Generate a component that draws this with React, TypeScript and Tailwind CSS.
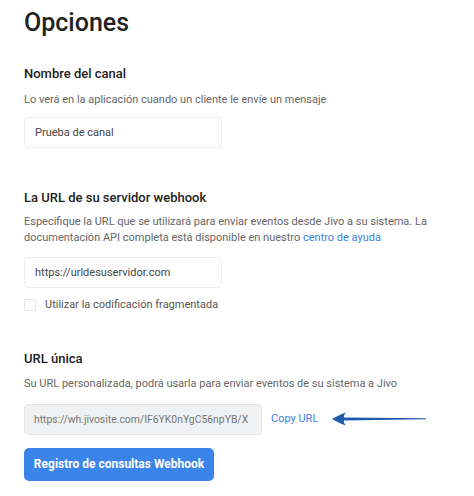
import { useState } from "react";

function Section({ title, children }: { title: string; children: React.ReactNode }) {
  return (
    <div className="flex flex-col">
      <h3 className="text-[13px] font-medium leading-[20px] text-[#222]">{title}</h3>
      {children}
    </div>
  );
}

export default function App() {
  const [chunked, setChunked] = useState(false);

  return (
    <div
      className="min-h-[496px] w-[474px] bg-white px-6 pt-[3px] text-[#333]"
      style={{ fontFamily: 'Roboto, "Noto Sans", sans-serif' }}
    >
      <h1 className="text-[25px] font-medium leading-[40px] text-[#222]">Opciones</h1>

      <div className="mt-[21px]">
        <Section title="Nombre del canal">
          <p className="mt-[7px] text-[11px] leading-[17px] text-[#666]">
            Lo verá en la aplicación cuando un cliente le envíe un mensaje
          </p>
          <input
            defaultValue="Prueba de canal"
            className="mt-[9px] h-[31px] w-[198px] rounded-[4px] border border-[#eceef0] px-[10px] text-[11px] text-[#444] outline-none"
          />
        </Section>
      </div>

      <div className="mt-[40px]">
        <Section title="La URL de su servidor webhook">
          <p className="mt-[6px] text-[11px] leading-[16px] text-[#666]">
            Especifique la URL que se utilizará para enviar eventos desde Jivo a su sistema. La
            documentación API completa está disponible en nuestro{" "}
            <a className="text-[#3d7fe0]">centro de ayuda</a>
          </p>
          <input
            defaultValue="https://urldesuservidor.com"
            className="mt-[11px] h-[31px] w-[198px] rounded-[4px] border border-[#eceef0] px-[10px] text-[11px] text-[#444] outline-none"
          />
          <label className="mt-[9px] flex items-center gap-[9px] text-[11px] text-[#555]">
            <input
              type="checkbox"
              checked={chunked}
              onChange={(e) => setChunked(e.target.checked)}
              className="h-[12px] w-[12px] appearance-none rounded-[2px] border border-[#e3e5e8]"
            />
            Utilizar la codificación fragmentada
          </label>
        </Section>
      </div>

      <div className="mt-[35px]">
        <Section title="URL única">
          <p className="mt-[6px] text-[11px] leading-[17px] text-[#666]">
            Su URL personalizada, podrá usarla para enviar eventos de su sistema a Jivo
          </p>
          <div className="mt-[12px] flex items-center">
            <input
              readOnly
              value="https://wh.jivosite.com/IF6YK0nYgC56npYB/X"
              className="h-[31px] w-[238px] rounded-[4px] border border-[#e2e4e6] bg-[#eff1f2] px-[9px] text-[10.4px] text-[#777] outline-none"
            />
            <a className="ml-[9px] text-[11px] text-[#3d7fe0]">Copy URL</a>
            <svg width="96" height="14" viewBox="0 0 96 14" className="ml-[13px]">
              <path d="M1 7 C5 5 10 2 15 0.5 C13 3 12.5 4.5 13 5.6 L95 6.2 L95 7.2 L13 8.4 C12.5 9.5 13 11 15 13.5 C10 12 5 9 1 7 Z" fill="#1d5bb0" />
            </svg>
          </div>
          <button className="mt-[13px] h-[33px] w-[190px] rounded-[5px] bg-[#3a84ea] text-[12px] font-bold text-white">
            Registro de consultas Webhook
          </button>
        </Section>
      </div>
    </div>
  );
}
